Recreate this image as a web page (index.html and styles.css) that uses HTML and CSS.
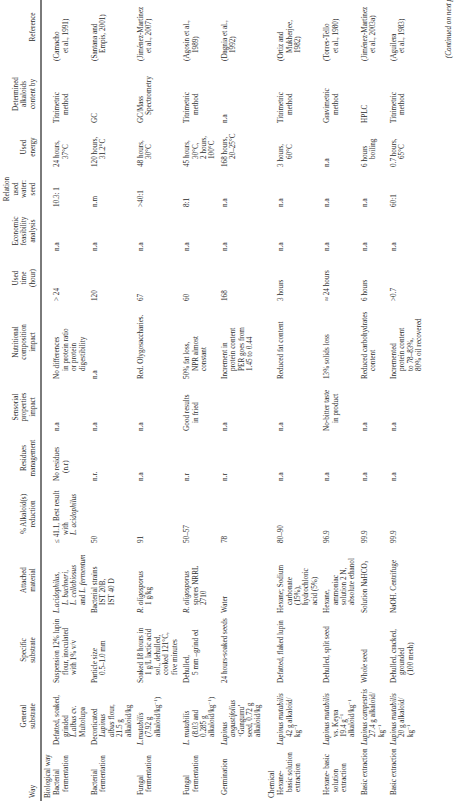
FILE: index.html
```html
<!DOCTYPE html>
<html lang="en">
<head>
<meta charset="utf-8">
<title>Table</title>
<link rel="stylesheet" href="styles.css">
</head>
<body>
<div class="page">
  <table class="tbl">
    <colgroup>
      <col class="c-way"><col class="c-gen"><col class="c-spec"><col class="c-att"><col class="c-alk"><col class="c-res"><col class="c-sens"><col class="c-nut"><col class="c-time"><col class="c-eco"><col class="c-rel"><col class="c-en"><col class="c-det"><col class="c-ref">
    </colgroup>
    <thead>
      <tr>
        <th class="left">Way</th>
        <th>General<br>substrate</th>
        <th>Specific<br>substrate</th>
        <th>Attached<br>material</th>
        <th>% Alkaloid(s)<br>reduction</th>
        <th>Residues<br>management</th>
        <th>Sensorial<br>properties<br>impact</th>
        <th>Nutritional<br>composition<br>impact</th>
        <th>Used<br>time<br>(hour)</th>
        <th>Economic<br>feasibility<br>analysis</th>
        <th>Relation<br>used<br>water:<br>seed</th>
        <th>Used<br>energy</th>
        <th>Determined<br>alkaloids<br>content by</th>
        <th>Reference</th>
      </tr>
    </thead>
    <tbody>
      <tr class="section"><td colspan="14">Biological way</td></tr>
      <tr>
        <td class="way">Bacterial<br>fermentation</td>
        <td>Defatted, soaked,<br>grinded<br><i>L.albus</i> cv.<br>Multolupa</td>
        <td>Suspension 12% lupin<br>flour, inoculated<br>with 1% v/v</td>
        <td><i>L.acidophilus</i>,<br><i>L. buchneri</i>,<br><i>L. cellobiosus</i><br>and <i>L. fermentum</i></td>
        <td>≤ 41.1, Best result<br>with<br><i>L. acidophilus</i></td>
        <td>No residues<br>(n.r)</td>
        <td>n.a</td>
        <td>No differences<br>in protein ratio<br>or protein<br>digestibility</td>
        <td>&gt; 24</td>
        <td>n.a</td>
        <td>10.3: 1</td>
        <td>24 hours,<br>37°C</td>
        <td>Titrimetric<br>method</td>
        <td>(Camacho<br>et al., 1991)</td>
      </tr>
      <tr>
        <td class="way">Bacterial<br>fermentation</td>
        <td>Decorticated<br><i>Lupinus</i><br><i>albus</i> flour,<br>21.5 g<br>alkaloid/kg</td>
        <td>Particle size<br>0.5–1.0 mm</td>
        <td>Bacterial strains<br>IST 20B,<br>IST 40 D</td>
        <td>50</td>
        <td>n.r.</td>
        <td>n.a</td>
        <td>n.a</td>
        <td>120</td>
        <td>n.a</td>
        <td>n.m</td>
        <td>120 hours,<br>31.2°C</td>
        <td>GC</td>
        <td>(Santana and<br>Empis, 2001)</td>
      </tr>
      <tr>
        <td class="way">Fungal<br>fermentation</td>
        <td><i>L.mutabilis</i><br>(7.92 g<br>alkaloid/kg<sup>−1</sup>)</td>
        <td>Soaked 18 hours in<br>1 g/L lactic acid<br>sol., dehulled,<br>cooked 121°C,<br>five minutes</td>
        <td><i>R. oligosporus</i><br>1 g/kg</td>
        <td>91</td>
        <td>n.a</td>
        <td>n.a</td>
        <td>Red. Olygosaccharies.</td>
        <td>67</td>
        <td>n.a</td>
        <td>&gt;40:1</td>
        <td>48 hours,<br>30°C</td>
        <td>GC/Mass<br>Spectrometry</td>
        <td>(Jiménez-Martínez<br>et al., 2007)</td>
      </tr>
      <tr>
        <td class="way">Fungal<br>fermentation</td>
        <td><i>L. mutabilis</i><br>(8.03 and<br>0.285 g<br>alkaloid/kg<sup>−1</sup>)</td>
        <td>Dehulled,<br>5 mm –grind ed</td>
        <td><i>R. oligosporus</i><br>spores NRRL<br>2710</td>
        <td>50–57</td>
        <td>n.r</td>
        <td>Good results<br>in fried</td>
        <td>50% fat loss,<br>NPR almost<br>constant</td>
        <td>60</td>
        <td>n.a</td>
        <td>8:1</td>
        <td>45 hours,<br>30°C,<br>2 hours,<br>100°C</td>
        <td>Titrimetric<br>method</td>
        <td>(Agosin et al.,<br>1989)</td>
      </tr>
      <tr>
        <td class="way">Germination</td>
        <td><i>Lupinus</i><br><i>angustifolius</i><br>‘Gungurru’<br>seed, 0.72 g<br>alkaloid/kg</td>
        <td>24 hours-soaked seeds</td>
        <td>Water</td>
        <td>78</td>
        <td>n.r</td>
        <td>n.a</td>
        <td>Increment in<br>protein content<br>PER goes from<br>1.45 to 0.44</td>
        <td>168</td>
        <td>n.a</td>
        <td>n.a</td>
        <td>168 hours,<br>20–25°C</td>
        <td>n.a</td>
        <td>(Dagnia et al.,<br>1992)</td>
      </tr>
      <tr class="section"><td colspan="14">Chemical</td></tr>
      <tr>
        <td class="way">Hexane-<br>basic solution<br>extraction</td>
        <td><i>Lupinus mutabilis</i><br>42 g alkaloid/<br>kg<sup>−1</sup></td>
        <td>Defatted, flaked lupin</td>
        <td>Hexane; Sodium<br>carbonate<br>(15%),<br>hydrochloric<br>acid (5%)</td>
        <td>80–90</td>
        <td>n.a</td>
        <td>n.a</td>
        <td>Reduced fat content</td>
        <td>3 hours</td>
        <td>n.a</td>
        <td>n.a</td>
        <td>3 hours,<br>60°C</td>
        <td>Titrimetric<br>method</td>
        <td>(Ortiz and<br>Mukherjee,<br>1982)</td>
      </tr>
      <tr>
        <td class="way">Hexane- basic<br>solution<br>extraction</td>
        <td><i>Lupinus mutabilis</i><br>vs. Keyra<br>19.4 g<sup>−1</sup><br>alkaloid/kg<sup>−1</sup></td>
        <td>Dehulled, split seed</td>
        <td>Hexane,<br>ammoniac<br>solution 2 N,<br>absolute ethanol</td>
        <td>96.9</td>
        <td>n.a</td>
        <td>No-bitter taste<br>in product</td>
        <td>13% solids loss</td>
        <td>≈ 24 hours</td>
        <td>n.a</td>
        <td>n.a</td>
        <td>n.a</td>
        <td>Gravimetric<br>method</td>
        <td>(Torres-Tello<br>et al., 1980)</td>
      </tr>
      <tr>
        <td class="way">Basic extraction</td>
        <td><i>Lupinus campestris</i><br>27.4 g alkaloid/<br>kg<sup>−1</sup></td>
        <td>Whole seed</td>
        <td>Solution NaHCO<sub>3</sub></td>
        <td>99.9</td>
        <td>n.a</td>
        <td>n.a</td>
        <td>Reduced carbohydrates<br>content</td>
        <td>6 hours</td>
        <td>n.a</td>
        <td>n.a</td>
        <td>6 hours<br>boiling</td>
        <td>HPLC</td>
        <td>(Jiménez-Martínez<br>et al., 2003a)</td>
      </tr>
      <tr>
        <td class="way">Basic extraction</td>
        <td><i>Lupinus mutabilis</i><br>20 g alkaloid/<br>kg<sup>−1</sup></td>
        <td>Dehulled, cracked,<br>grounded<br>(100 mesh)</td>
        <td>NaOH. Centrifuge</td>
        <td>99.9</td>
        <td>n.a</td>
        <td>n.a</td>
        <td>Incremented<br>protein content<br>to 78–83%,<br>80% oil recovered</td>
        <td>&gt;0.7</td>
        <td>n.a</td>
        <td>60:1</td>
        <td>0.7 hours,<br>65°C</td>
        <td>Titrimetric<br>method</td>
        <td>(Aguilera<br>et al., 1983)</td>
      </tr>
    </tbody>
  </table>
  <p class="cont"><i>(Continued on next page)</i></p>
</div>
</body>
</html>
```

FILE: styles.css
```css
html, body {
  margin: 0;
  padding: 0;
  background: #ffffff;
}
body {
  width: 474px;
  height: 801px;
  overflow: hidden;
  font-family: "Liberation Serif", "Times New Roman", serif;
  color: #2b2b2b;
}
.page {
  width: 816px;
  height: 474px;
  transform-origin: 0 0;
  transform: translateY(801px) rotate(-90deg);
  font-size: 7.2px;
  line-height: 8.4px;
}
.tbl {
  border-collapse: collapse;
  table-layout: fixed;
  width: 810px;
}
.c-way { width: 54px; }
.c-gen { width: 62px; }
.c-spec { width: 70px; }
.c-att { width: 70px; }
.c-alk { width: 62px; }
.c-res { width: 50px; }
.c-sens { width: 52px; }
.c-nut { width: 78px; }
.c-time { width: 50px; }
.c-eco { width: 44px; }
.c-rel { width: 40px; }
.c-en { width: 44px; }
.c-det { width: 62px; }
.c-ref { width: 72px; }

.tbl th {
  font-weight: normal;
  text-align: center;
  vertical-align: bottom;
  padding: 1px 2px 3px 2px;
  height: 36px;
}
.tbl th.left {
  text-align: left;
  padding-left: 3px;
}
.tbl thead tr {
  border-bottom: 2px solid #7a7a7a;
}
.tbl td {
  vertical-align: top;
  padding: 1px 2px 3px 10px;
  text-indent: -8px;
  white-space: nowrap;
}
.tbl td.way {
  padding-left: 9px;
  text-indent: -3px;
}
.tbl tr.section td {
  padding: 2px 3px 0 3px;
  text-indent: 0;
}
.tbl sup {
  font-size: 5px;
  line-height: 0;
  vertical-align: 3px;
}
.tbl sub {
  font-size: 5px;
  line-height: 0;
  vertical-align: -1px;
}
.cont {
  margin: 18px 0 0 0;
  text-align: right;
  font-size: 7.2px;
}
```
